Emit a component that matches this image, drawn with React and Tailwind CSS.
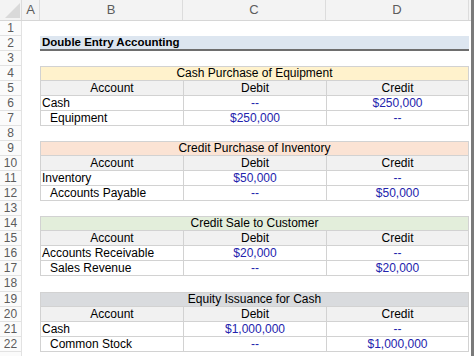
const SECTIONS = [
  {
    start: 4,
    title: 'Cash Purchase of Equipment',
    bg: 'bg-[#fff2cc]',
    rows: [
      { account: 'Cash', indent: false, debit: '--', credit: '$250,000' },
      { account: 'Equipment', indent: true, debit: '$250,000', credit: '--' },
    ],
  },
  {
    start: 9,
    title: 'Credit Purchase of Inventory',
    bg: 'bg-[#fbe3d4]',
    rows: [
      { account: 'Inventory', indent: false, debit: '$50,000', credit: '--' },
      { account: 'Accounts Payable', indent: true, debit: '--', credit: '$50,000' },
    ],
  },
  {
    start: 14,
    title: 'Credit Sale to Customer',
    bg: 'bg-[#e3eedb]',
    rows: [
      { account: 'Accounts Receivable', indent: false, debit: '$20,000', credit: '--' },
      { account: 'Sales Revenue', indent: true, debit: '--', credit: '$20,000' },
    ],
  },
  {
    start: 19,
    title: 'Equity Issuance for Cash',
    bg: 'bg-[#d9dbde]',
    rows: [
      { account: 'Cash', indent: false, debit: '$1,000,000', credit: '--' },
      { account: 'Common Stock', indent: true, debit: '--', credit: '$1,000,000' },
    ],
  },
];

function Row({ n, children, tall = false }) {
  return (
    <div className={`flex ${tall ? 'h-[16px]' : 'h-[15px]'}`}>
      <div className="w-[22px] shrink-0 border-r border-b border-[#e2e2e2] bg-[#fbfbfb] text-center text-[12px] leading-[14px] text-[#5c5c5c]">
        {n}
      </div>
      <div className="w-[18px] shrink-0" />
      <div className="w-[429px] shrink-0 flex">{children}</div>
    </div>
  );
}

function Cell({ children, className = '' }) {
  return (
    <div className={`w-[143px] shrink-0 border-l border-b border-[#d2d2d2] text-[12px] leading-[14px] whitespace-nowrap ${className}`}>
      {children}
    </div>
  );
}

function Section({ s }) {
  return (
    <>
      <Row n={s.start}>
        <div className={`w-[429px] border border-[#d2d2d2] ${s.bg} text-center text-[12px] leading-[13px] text-black`}>
          {s.title}
        </div>
      </Row>
      <Row n={s.start + 1}>
        <Cell className="bg-[#f1f1f1] text-center">Account</Cell>
        <Cell className="bg-[#f1f1f1] text-center">Debit</Cell>
        <Cell className="bg-[#f1f1f1] text-center border-r">Credit</Cell>
      </Row>
      {s.rows.map((r, i) => (
        <Row key={i} n={s.start + 2 + i}>
          <Cell className={r.indent ? 'pl-[9px]' : 'pl-[1px]'}>{r.account}</Cell>
          <Cell className="text-center text-[#2323ad]">{r.debit}</Cell>
          <Cell className="text-center text-[#2323ad] border-r">{r.credit}</Cell>
        </Row>
      ))}
    </>
  );
}

export default function App() {
  return (
    <div className="w-[474px] h-[356px] overflow-hidden bg-white font-['Liberation_Sans',Arial,sans-serif] text-black flex">
      <div className="w-[471px]">
        {/* column headers */}
        <div className="flex h-[21px] bg-[#f3f3f3] border-b border-[#d6d6d6] text-[13px] text-[#5c5c5c]">
          <div className="w-[22px] shrink-0 border-r border-[#dcdcdc]">
            <svg width="22" height="20" viewBox="0 0 22 20" aria-hidden="true">
              <polygon points="20,3 20,18 5,18" fill="#d9d9d9" />
            </svg>
          </div>
          <div className="w-[18px] shrink-0 border-r border-[#dcdcdc] flex items-center justify-center">A</div>
          <div className="w-[143px] shrink-0 border-r border-[#dcdcdc] flex items-center justify-center">B</div>
          <div className="w-[143px] shrink-0 border-r border-[#dcdcdc] flex items-center justify-center">C</div>
          <div className="w-[143px] shrink-0 border-r border-[#dcdcdc] flex items-center justify-center">D</div>
          <div className="flex-1" />
        </div>

        <Row n={1} />
        <Row n={2}>
          <div className="w-[429px] bg-[#dde6f0] border-b-2 border-[#6e6e6e] pl-[2px] text-[11.5px] font-bold leading-[13px]">
            Double Entry Accounting
          </div>
        </Row>
        <Row n={3} />
        <Section s={SECTIONS[0]} />
        <Row n={8} />
        <Section s={SECTIONS[1]} />
        <Row n={13} />
        <Section s={SECTIONS[2]} />
        <Row n={18} tall />
        <Section s={SECTIONS[3]} />
        <Row />
      </div>
      <div className="w-[3px] bg-[#7a7a7a]" />
    </div>
  );
}
